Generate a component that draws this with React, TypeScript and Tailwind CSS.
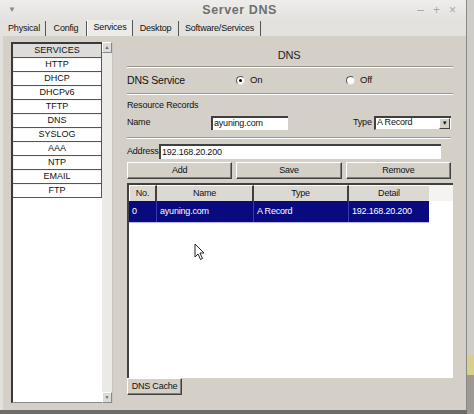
import React from "react";

const services = ["HTTP", "DHCP", "DHCPv6", "TFTP", "DNS", "SYSLOG", "AAA", "NTP", "EMAIL", "FTP"];

const tabs = [
  { label: "Physical", w: "w-[43px]" },
  { label: "Config", w: "w-[41px]" },
  { label: "Services", w: "w-[46px]", active: true },
  { label: "Desktop", w: "w-[46px]" },
  { label: "Software/Services", w: "w-[82px]" },
];

// bouton style Windows classique
function Btn({ label, className = "" }: { label: string; className?: string }) {
  return (
    <div
      className={`flex items-center justify-center bg-[#d4d0c8] border border-t-white border-l-white border-b-[#404040] border-r-[#404040] shadow-[inset_-1px_-1px_0_#808080] text-[9px] tracking-[-0.2px] text-[#111] ${className}`}
    >
      {label}
    </div>
  );
}

function Etched() {
  return <div className="h-[2px] border-t border-t-[#9a978f] border-b border-b-white" />;
}

function Radio({ checked }: { checked?: boolean }) {
  return (
    <div className="w-[9px] h-[9px] rounded-full bg-white border border-t-[#555] border-l-[#555] border-b-[#e0ddd7] border-r-[#e0ddd7] flex items-center justify-center">
      {checked && <div className="w-[3px] h-[3px] rounded-full bg-black" />}
    </div>
  );
}

function Cursor() {
  return (
    <svg width="12" height="18" viewBox="0 0 12 18" className="absolute left-[194px] top-[243px]">
      <path d="M1 1 L1 14 L4 11 L6.5 16.5 L8.5 15.5 L6 10 L10 10 Z" fill="white" stroke="#222" strokeWidth="1" strokeLinejoin="round" />
    </svg>
  );
}

export default function App() {
  return (
    <div
      className="relative w-[474px] h-[414px] overflow-hidden flex bg-[#6e6c69]"
      style={{ fontFamily: "'Liberation Sans', 'DejaVu Sans', Arial, sans-serif" }}
    >
      {/* Window */}
      <div className="w-[467px] h-[410px] flex flex-col bg-[#d4d0c8] border-r border-r-[#8a8884]">
        {/* Title bar */}
        <div className="h-[20px] flex items-center bg-gradient-to-b from-[#eeedeb] to-[#e4e2df] px-[8px]">
          <span className="text-[8px] text-[#8a8a8a] w-[14px]">▼</span>
          <div className="flex-1 text-center text-[12.5px] font-semibold tracking-[0.6px] text-[#707070] pl-[40px]">Server DNS</div>
          <div className="flex items-center gap-[9px] text-[12px] text-[#a8a8a8] pr-[2px]">
            <span>–</span>
            <span>+</span>
            <span>×</span>
          </div>
        </div>

        {/* Tabs */}
        <div className="h-[16px] flex items-end bg-[#e4e2de] pl-[3px]">
          {tabs.map((t) => (
            <div
              key={t.label}
              className={`${t.w} h-[15px] flex items-center justify-center text-[9px] tracking-[-0.2px] text-[#111] border-r border-r-[#555] ${
                t.active ? "bg-[#ecebe8] border-l border-l-white h-[16px]" : ""
              }`}
            >
              {t.label}
            </div>
          ))}
        </div>

        {/* Content */}
        <div className="flex-1 flex pl-[8px] pt-[6px] pb-[7px] border-l-[3px] border-l-[#e2e0dc]">
          {/* Services list */}
          <div className="flex h-[361px]">
            <div className="w-[91px] bg-white border-l-2 border-t-2 border-l-[#3a3a3a] border-t-[#3a3a3a] border-b border-b-[#888]">
              <div className="h-[14px] flex items-center justify-center bg-[#dedcda] text-[9px] text-[#111] border-b border-b-[#555] border-r border-r-[#555]">
                SERVICES
              </div>
              {services.map((s) => (
                <div
                  key={s}
                  className="h-[14px] flex items-center justify-center text-[9px] text-[#111] border-b border-b-[#555] border-r border-r-[#555] shadow-[inset_1px_1px_0_#f4f4f4]"
                >
                  {s}
                </div>
              ))}
            </div>
            <div className="w-[11px] bg-[#eceae6] flex flex-col justify-between border-r border-r-[#c8c5bf]">
              <div className="h-[11px] bg-[#dedcd8] border border-t-white border-l-white border-b-[#888] border-r-[#888] flex items-center justify-center text-[5px] text-[#666]">
                ▲
              </div>
              <div className="h-[11px] bg-[#dedcd8] border border-t-white border-l-white border-b-[#888] border-r-[#888] flex items-center justify-center text-[5px] text-[#666]">
                ▼
              </div>
            </div>
          </div>

          {/* Right panel */}
          <div className="w-[326px] ml-[14px] flex flex-col text-[#111] tracking-[-0.2px]">
            <div className="h-[24px] flex items-end justify-center pb-[3px] text-[11px] text-[#222] pr-[2px]">DNS</div>
            <Etched />
            <div className="h-[25px] flex items-center">
              <span className="w-[109px] text-[10.5px]">DNS Service</span>
              <div className="w-[110px] flex items-center gap-[5px] text-[9.5px]">
                <Radio checked />
                <span>On</span>
              </div>
              <div className="flex items-center gap-[5px] text-[9.5px]">
                <Radio />
                <span>Off</span>
              </div>
            </div>
            <Etched />
            <div className="h-[17px] flex items-end text-[9px]">Resource Records</div>
            <div className="h-[21px] flex items-center text-[9px]">
              <span className="w-[84px]">Name</span>
              <div className="w-[77px] h-[14px] bg-white border-t-2 border-l-2 border-t-[#404040] border-l-[#404040] flex items-center pl-[1px] text-[9px]">
                ayuning.com
              </div>
              <span className="ml-[65px] w-[21px]">Type</span>
              <div className="w-[77px] h-[14px] bg-white border-t-2 border-l-2 border-t-[#404040] border-l-[#404040] border-b border-b-[#d4d0c8] flex items-center pl-[1px] text-[9px] justify-between">
                <span>A Record</span>
                <div className="w-[11px] h-[11px] bg-[#d4d0c8] border border-t-white border-l-white border-b-[#404040] border-r-[#404040] flex items-center justify-center text-[6px] mr-[1px]">
                  ▼
                </div>
              </div>
            </div>
            <div className="mt-[4px] mr-[2px]">
              <Etched />
            </div>
            <div className="mt-[5px] h-[15px] flex items-center text-[9px]">
              <span className="w-[32px] whitespace-nowrap">Address</span>
              <div className="w-[282px] h-[15px] bg-white border-t-2 border-l-2 border-t-[#404040] border-l-[#404040] flex items-center pl-[1px] text-[9px]">
                192.168.20.200
              </div>
            </div>
            <div className="mt-[3px] flex gap-[4px] pr-[2px]">
              <Btn label="Add" className="w-[106px] h-[17px]" />
              <Btn label="Save" className="w-[106px] h-[17px]" />
              <Btn label="Remove" className="w-[106px] h-[17px]" />
            </div>

            {/* Table */}
            <div className="mt-[4px] h-[195px] bg-white border-t-2 border-l-2 border-t-[#404040] border-l-[#404040] flex flex-col">
              <div className="h-[16px] flex text-[9px]">
                <div className="w-[28px] flex items-center justify-center bg-[#dcd9d3] border-r-2 border-r-[#404040] border-l border-l-white border-t border-t-white">No.</div>
                <div className="w-[97px] flex items-center justify-center bg-[#dcd9d3] border-r-2 border-r-[#404040] border-t border-t-white">Name</div>
                <div className="w-[95px] flex items-center justify-center bg-[#dcd9d3] border-r-2 border-r-[#404040] border-t border-t-white">Type</div>
                <div className="w-[80px] flex items-center justify-center bg-[#dcd9d3] border-t border-t-white">Detail</div>
                <div className="flex-1 bg-[#f4f3f1]" />
              </div>
              <div className="h-[22px] w-[300px] flex bg-[#0a0a80] text-white text-[9px] border-b border-b-[#b8b8ee]">
                <div className="w-[28px] flex items-center pl-[3px] border-r border-r-[#3a3aa8]">0</div>
                <div className="w-[97px] flex items-center pl-[3px] border-r border-r-[#3a3aa8]">ayuning.com</div>
                <div className="w-[95px] flex items-center pl-[3px] border-r border-r-[#3a3aa8]">A Record</div>
                <div className="w-[80px] flex items-center pl-[3px]">192.168.20.200</div>
              </div>
            </div>

            <div>
              <Btn label="DNS Cache" className="w-[55px] h-[17px]" />
            </div>
          </div>
        </div>
      </div>

      {/* Fond derrière la fenêtre */}
      <div className="flex-1 flex flex-col">
        <div className="h-[355px] bg-[#cfcdc8]" />
        <div className="h-[20px] bg-[#d8cf8a]" />
        <div className="flex-1 bg-[#9d9a95]" />
      </div>

      <Cursor />
    </div>
  );
}
